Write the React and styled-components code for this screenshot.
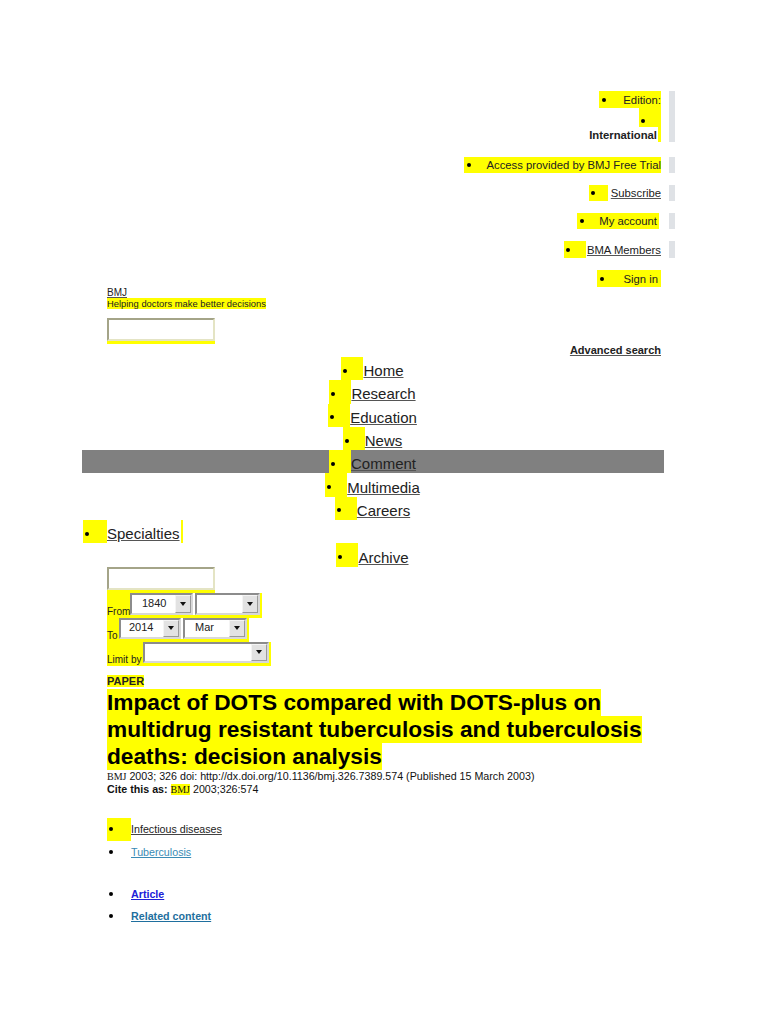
import styled, { createGlobalStyle } from 'styled-components'

const GlobalStyle = createGlobalStyle`
  body {
    margin: 0;
    background: #fff;
    color: #222;
    font-family: "Liberation Sans", Arial, sans-serif;
  }
  ul {
    list-style: none;
    margin: 0;
    padding: 0;
  }
`

const Page = styled.div`
  margin-left: 82px;
  width: 582px;
  padding-top: 91px;
  padding-bottom: 80px;
`

const Dot = styled.span`
  display: inline-block;
  flex: none;
  width: 4px;
  height: 4px;
  border-radius: 50%;
  background: #000;
`

const Link = styled.a`
  color: ${props => props.$color || '#222'};
  font-weight: ${props => (props.$bold ? 'bold' : 'normal')};
  text-decoration: underline;
  text-decoration-color: ${props => props.$line || '#555'};
  text-underline-offset: 1px;
  cursor: pointer;
`

/* top right utility list */

const TopList = styled.ul`
  display: flex;
  flex-direction: column;
  align-items: flex-end;
  gap: 12px;
  margin-right: -11px !important;
  font-size: 11.3px;
`

const TopItem = styled.li`
  display: flex;
  align-items: stretch;
  margin-bottom: ${props => props.$after || 0}px;
`

const TopBody = styled.div`
  display: flex;
  flex-direction: column;
  align-items: flex-end;
`

const Separator = styled.span`
  width: 6px;
  margin-left: 8px;
  background: ${props => (props.$hidden ? 'transparent' : '#dfe2e6')};
`

const Highlight = styled.span`
  display: inline-flex;
  align-items: center;
  box-sizing: border-box;
  height: ${props => props.$h || 16}px;
  padding-left: 3px;
  padding-right: ${props => props.$pr || 0}px;
  background: #ffff00;
  border-right: ${props => (props.$edge ? '2px solid #fff' : '0')};
  ${Dot} {
    margin-right: ${props => props.$gap || 15}px;
  }
`

const BulletBox = styled.span`
  display: inline-flex;
  align-items: ${props => props.$align || 'center'};
  box-sizing: border-box;
  width: ${props => props.$w || 22}px;
  height: ${props => props.$h || 16}px;
  padding: 0 0 ${props => props.$pb || 0}px 2px;
  background: #ffff00;
  flex: none;
`

const TopRow = styled.span`
  display: inline-flex;
  align-items: center;
  height: ${props => props.$h || 16}px;
  ${Link} {
    margin-left: ${props => props.$gap ?? 3}px;
  }
`

const Bold = styled.span`
  display: inline-flex;
  align-items: center;
  height: 15px;
  font-weight: bold;
  padding-right: 1px;
  border-right: 3px solid #ffff00;
`

/* brand + search */

const Brand = styled.div`
  padding-left: 25px;
  font-size: 10px;
  line-height: 11px;
`

const Tagline = styled.div`
  font-size: 9.4px;
  span {
    background: #ffff00;
  }
`

const FieldWrap = styled.div`
  display: inline-block;
  margin-top: ${props => props.$mt || 0}px;
  margin-left: 25px;
  padding-bottom: 3px;
  background: #ffff00;
  line-height: 0;
`

const TextBox = styled.input`
  box-sizing: border-box;
  width: 108px;
  height: 23px;
  margin: 0;
  border: 2px solid;
  border-color: #a4a488 #e4e4c4 #e4e4c4 #a4a488;
  background: #fff;
  outline: none;
`

const Advanced = styled.div`
  text-align: right;
  padding-right: 3px;
  font-size: 11px;
  line-height: 13px;
`

/* main nav */

const Nav = styled.ul`
  font-size: 15px;
`

const NavRow = styled.li`
  display: flex;
  justify-content: ${props => (props.$left ? 'flex-start' : 'center')};
  align-items: stretch;
  height: 23.3px;
  padding-left: ${props => (props.$left ? '1px' : '0')};
  background: ${props => (props.$active ? '#808080' : 'transparent')};
`

const NavMark = styled.span`
  display: flex;
  align-items: center;
  width: ${props => props.$w || 22}px;
  padding-left: 2px;
  padding-top: 4px;
  box-sizing: border-box;
  background: #ffff00;
`

const NavText = styled.span`
  display: flex;
  align-items: center;
  padding-top: 4px;
  padding-right: 1px;
  border-right: ${props => (props.$edge ? '2px solid #ffff00' : '0')};
`

/* archive form */

const FormRows = styled.div`
  padding-left: 25px;
  display: flex;
  flex-direction: column;
  align-items: flex-start;
`

const FormRow = styled.div`
  display: inline-flex;
  align-items: flex-start;
  background: #ffff00;
  padding: 0 2px 3px 0;
  margin-top: ${props => props.$mt || 0}px;
`

const RowLabel = styled.span`
  align-self: stretch;
  display: flex;
  align-items: flex-end;
  width: ${props => props.$w}px;
  margin-bottom: -3px;
  padding-bottom: 1px;
  font-size: 10px;
  line-height: 11px;
`

const Selects = styled.div`
  display: flex;
  gap: 2px;
  background: #fff;
`

const Select = styled.div`
  display: inline-flex;
  align-items: stretch;
  box-sizing: border-box;
  width: ${props => props.$w}px;
  height: ${props => props.$h || 21}px;
  border: 2px solid;
  border-color: #8c8c8c #d8d8d8 #d8d8d8 #8c8c8c;
  background: #fff;
  font-size: 11px;
`

const SelectValue = styled.span`
  flex: 1;
  display: flex;
  align-items: center;
  padding-left: ${props => props.$pl || 10}px;
  padding-bottom: 2px;
`

const SelectArrow = styled.span`
  width: 14px;
  display: flex;
  align-items: center;
  justify-content: center;
  background: #e2e2e2;
  border: 1px solid;
  border-color: #f4f4f4 #9a9a9a #9a9a9a #f4f4f4;
  &::after {
    content: '';
    border-left: 3px solid transparent;
    border-right: 3px solid transparent;
    border-top: 4px solid #111;
  }
`

/* article header */

const Article = styled.div`
  padding-left: 25px;
  padding-right: 3px;
  margin-top: 9px;
`

const Kicker = styled.div`
  font-size: 11px;
  line-height: 12px;
  font-weight: bold;
  span {
    background: #ffff00;
  }
`

const Title = styled.h1`
  margin: 2px 0 0;
  font-size: 22.7px;
  line-height: 27px;
  font-weight: bold;
  color: #000;
  span {
    background: #ffff00;
    padding-bottom: 1px;
  }
`

const Meta = styled.div`
  font-size: 10.7px;
  line-height: 12px;
  color: #111;
`

const Journal = styled.span`
  font-family: "Liberation Serif", "Times New Roman", serif;
  font-size: 10px;
  background: ${props => (props.$mark ? '#ffff00' : 'transparent')};
`

const TagList = styled.ul`
  margin-top: ${props => props.$mt}px !important;
  font-size: 10.7px;
`

const TagRow = styled.li`
  display: flex;
  align-items: center;
  height: ${props => props.$h || 23}px;
`

const TagMark = styled.span`
  display: flex;
  align-items: center;
  align-self: stretch;
  width: 24px;
  padding-left: 2px;
  box-sizing: border-box;
  background: ${props => (props.$mark ? '#ffff00' : 'transparent')};
`

const navItems = ['Home', 'Research', 'Education', 'News', 'Comment', 'Multimedia', 'Careers']

const App = () => {
  return (
    <>
      <GlobalStyle />
      <Page>
        <TopList>
          <TopItem $after={3}>
            <TopBody>
              <Highlight $h={17} $gap={17}>
                <Dot />Edition:
              </Highlight>
              <BulletBox $h={19} $align="flex-end" $pb={4}>
                <Dot />
              </BulletBox>
              <Bold>International</Bold>
            </TopBody>
            <Separator />
          </TopItem>
          <TopItem>
            <Highlight>
              <Dot />Access provided by BMJ Free Trial
            </Highlight>
            <Separator />
          </TopItem>
          <TopItem>
            <TopRow>
              <BulletBox $w={19}><Dot /></BulletBox>
              <Link>Subscribe</Link>
            </TopRow>
            <Separator />
          </TopItem>
          <TopItem>
            <Highlight $pr={2} $edge>
              <Dot />My account
            </Highlight>
            <Separator />
          </TopItem>
          <TopItem>
            <TopRow $h={17} $gap={1}>
              <BulletBox $w={22} $h={17}><Dot /></BulletBox>
              <Link>BMA Members</Link>
            </TopRow>
            <Separator />
          </TopItem>
          <TopItem>
            <Highlight $h={17} $pr={3} $gap={19}>
              <Dot />Sign in
            </Highlight>
            <Separator $hidden />
          </TopItem>
        </TopList>

        <Brand>
          <div><Link>BMJ</Link></div>
          <Tagline><span>Helping doctors make better decisions</span></Tagline>
        </Brand>
        <FieldWrap $mt={9}>
          <TextBox type="text" />
        </FieldWrap>
        <Advanced>
          <Link $bold>Advanced search</Link>
        </Advanced>

        <Nav>
          {navItems.map(item => (
            <NavRow key={item} $active={item === 'Comment'}>
              <NavMark><Dot /></NavMark>
              <NavText><Link>{item}</Link></NavText>
            </NavRow>
          ))}
          <NavRow $left>
            <NavMark $w={24}><Dot /></NavMark>
            <NavText $edge><Link>Specialties</Link></NavText>
          </NavRow>
          <NavRow>
            <NavMark><Dot /></NavMark>
            <NavText><Link>Archive</Link></NavText>
          </NavRow>
        </Nav>

        <FieldWrap>
          <TextBox type="text" />
        </FieldWrap>
        <FormRows>
          <FormRow>
            <RowLabel $w={23}>From</RowLabel>
            <Selects>
              <Select $w={63} $h={22}>
                <SelectValue>1840</SelectValue>
                <SelectArrow />
              </Select>
              <Select $w={65} $h={22}>
                <SelectValue />
                <SelectArrow />
              </Select>
            </Selects>
          </FormRow>
          <FormRow>
            <RowLabel $w={12}>To</RowLabel>
            <Selects>
              <Select $w={62}>
                <SelectValue $pl={8}>2014</SelectValue>
                <SelectArrow />
              </Select>
              <Select $w={64}>
                <SelectValue>Mar</SelectValue>
                <SelectArrow />
              </Select>
            </Selects>
          </FormRow>
          <FormRow>
            <RowLabel $w={36}>Limit by</RowLabel>
            <Selects>
              <Select $w={126}>
                <SelectValue />
                <SelectArrow />
              </Select>
            </Selects>
          </FormRow>
        </FormRows>

        <Article>
          <Kicker><span>PAPER</span></Kicker>
          <Title>
            <span>Impact of DOTS compared with DOTS-plus on multidrug resistant tuberculosis and tuberculosis deaths: decision analysis</span>
          </Title>
          <Meta>
            <div>
              <Journal>BMJ</Journal> 2003; 326 doi: http://dx.doi.org/10.1136/bmj.326.7389.574 (Published 15 March 2003)
            </div>
            <div>
              <b>Cite this as: </b><Journal $mark>BMJ</Journal> 2003;326:574
            </div>
          </Meta>
        </Article>

        <FormRows>
          <TagList $mt={22}>
            <TagRow>
              <TagMark $mark><Dot /></TagMark>
              <Link $line="#444">Infectious diseases</Link>
            </TagRow>
            <TagRow>
              <TagMark><Dot /></TagMark>
              <Link $color="#3a8bb5" $line="#3a8bb5">Tuberculosis</Link>
            </TagRow>
          </TagList>
          <TagList $mt={19}>
            <TagRow $h={22}>
              <TagMark><Dot /></TagMark>
              <Link $bold $color="#2020d8" $line="#2020d8">Article</Link>
            </TagRow>
            <TagRow $h={22}>
              <TagMark><Dot /></TagMark>
              <Link $bold $color="#1f6f9e" $line="#1f6f9e">Related content</Link>
            </TagRow>
          </TagList>
        </FormRows>
      </Page>
    </>
  )
}

export default App
